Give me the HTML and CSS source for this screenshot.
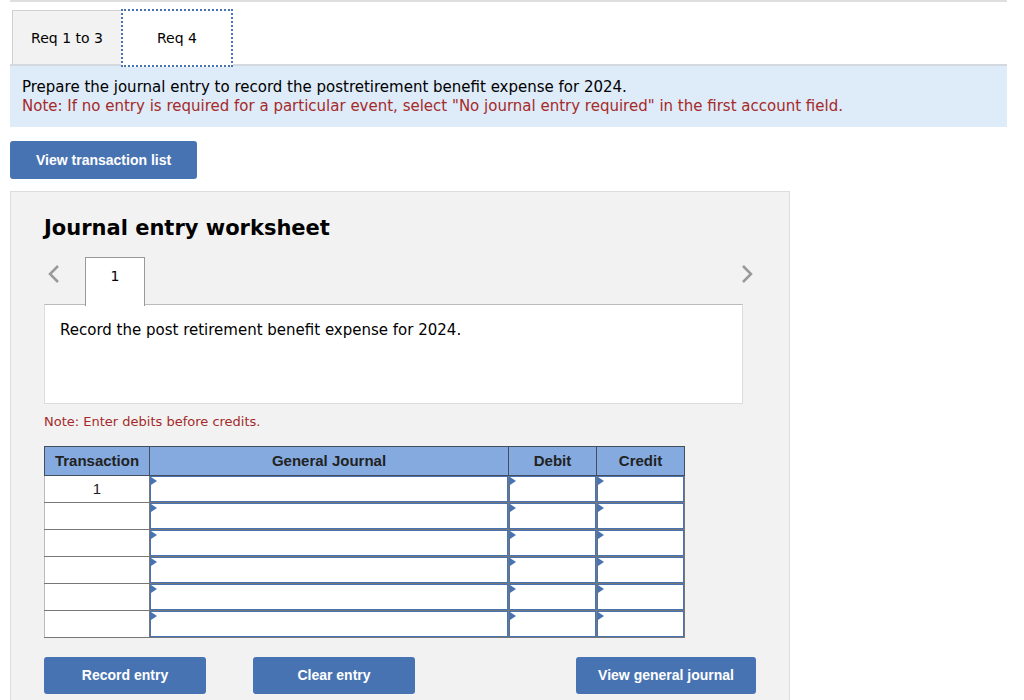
FILE: index.html
```html
<!DOCTYPE html>
<html lang="en">
<head>
  <meta charset="UTF-8">
  <title>Journal entry worksheet</title>
  <meta name="viewport" content="width=device-width, initial-scale=1.0">
  <link rel="stylesheet" href="styles.css">
</head>
<body>
  <main class="page">
    <nav class="req-tabs">
      <button type="button" class="req-tab">Req 1 to 3</button>
      <button type="button" class="req-tab active">Req 4</button>
    </nav>
    <div class="instructions">
      <p>Prepare the journal entry to record the postretirement benefit expense for 2024.</p>
      <p class="note">Note: If no entry is required for a particular event, select "No journal entry required" in the first account field.</p>
    </div>
    <button type="button" class="btn btn-list">View transaction list</button>

    <section class="worksheet">
      <h2>Journal entry worksheet</h2>
      <div class="entry-nav">
        <button type="button" class="arrow" aria-label="Previous entry">
          <svg width="12" height="20" viewBox="0 0 12 20"><path d="M10 2 L2 10 L10 18"/></svg>
        </button>
        <button type="button" class="entry-tab">1</button>
        <button type="button" class="arrow next" aria-label="Next entry">
          <svg width="12" height="20" viewBox="0 0 12 20"><path d="M2 2 L10 10 L2 18"/></svg>
        </button>
      </div>
      <div class="description">Record the post retirement benefit expense for 2024.</div>
      <p class="note table-note">Note: Enter debits before credits.</p>

      <table class="journal">
        <thead>
          <tr>
            <th class="col-transaction">Transaction</th>
            <th class="col-account">General Journal</th>
            <th class="col-amount">Debit</th>
            <th class="col-amount">Credit</th>
          </tr>
        </thead>
        <tbody>
          <tr>
            <td>1</td>
            <td class="field"><input type="text" aria-label="General Journal, row 1"></td>
            <td class="field"><input type="text" aria-label="Debit, row 1"></td>
            <td class="field"><input type="text" aria-label="Credit, row 1"></td>
          </tr>
          <tr>
            <td></td>
            <td class="field"><input type="text" aria-label="General Journal, row 2"></td>
            <td class="field"><input type="text" aria-label="Debit, row 2"></td>
            <td class="field"><input type="text" aria-label="Credit, row 2"></td>
          </tr>
          <tr>
            <td></td>
            <td class="field"><input type="text" aria-label="General Journal, row 3"></td>
            <td class="field"><input type="text" aria-label="Debit, row 3"></td>
            <td class="field"><input type="text" aria-label="Credit, row 3"></td>
          </tr>
          <tr>
            <td></td>
            <td class="field"><input type="text" aria-label="General Journal, row 4"></td>
            <td class="field"><input type="text" aria-label="Debit, row 4"></td>
            <td class="field"><input type="text" aria-label="Credit, row 4"></td>
          </tr>
          <tr>
            <td></td>
            <td class="field"><input type="text" aria-label="General Journal, row 5"></td>
            <td class="field"><input type="text" aria-label="Debit, row 5"></td>
            <td class="field"><input type="text" aria-label="Credit, row 5"></td>
          </tr>
          <tr>
            <td></td>
            <td class="field"><input type="text" aria-label="General Journal, row 6"></td>
            <td class="field"><input type="text" aria-label="Debit, row 6"></td>
            <td class="field"><input type="text" aria-label="Credit, row 6"></td>
          </tr>
        </tbody>
      </table>

      <div class="actions">
        <button type="button" class="btn">Record entry</button>
        <button type="button" class="btn">Clear entry</button>
        <button type="button" class="btn btn-journal">View general journal</button>
      </div>
    </section>
  </main>
</body>
</html>
```
FILE: styles.css
```css
* {
  box-sizing: border-box;
}
body {
  margin: 0;
  background-color: #fff;
  color: #000;
  font-family: Verdana, "DejaVu Sans", sans-serif;
  font-size: 15px;
}
p, h2 {
  margin: 0;
}
button {
  font-family: inherit;
  color: inherit;
  cursor: pointer;
}
.page {
  margin: 0 17px 0 10px;
  border-top: 2px solid #dfdfdf;
}

/* requirement tabs */
.req-tabs {
  display: flex;
  padding: 7px 0 0 2px;
}
.req-tab {
  width: 110px;
  height: 54px;
  margin-top: 1px;
  border: 1px solid #d0d0d0;
  border-bottom: none;
  background-color: #f2f2f2;
  font-size: 14px;
}
.req-tab.active {
  position: relative;
  width: 112px;
  height: 58px;
  margin: 0 0 -3px -1px;
  border: 2px dotted #4873b3;
  background-color: #fff;
}
.instructions {
  padding: 12px 12px 11px;
  border-top: 2px solid #d3d9df;
  background-color: #deebf8;
  line-height: 19px;
}
.note {
  color: #a52a2a;
}

.btn {
  height: 37px;
  min-width: 162px;
  padding: 0 22px 1px;
  border: none;
  border-radius: 3px;
  background-color: #4873b3;
  color: #fff;
  font-family: Arial, "Liberation Sans", sans-serif;
  font-size: 14px;
  font-weight: bold;
}
.btn-list {
  display: block;
  height: 38px;
  margin: 14px 0 12px;
  padding: 0 26px 1px;
}

/* worksheet */
.worksheet {
  max-width: 780px;
  padding: 23px 33px 24px;
  border: 1px solid #dcdcdc;
  background-color: #f2f2f2;
}
.worksheet h2 {
  font-size: 21px;
  line-height: 26px;
}
.entry-nav {
  display: flex;
  align-items: flex-start;
  margin-top: 16px;
}
.arrow {
  display: flex;
  width: 41px;
  padding: 7px 4px;
  border: none;
  background: none;
}
.arrow.next {
  width: auto;
  margin-left: auto;
  padding-right: 3px;
}
.arrow svg {
  fill: none;
  stroke: #999;
  stroke-width: 2.5;
}
.entry-tab {
  position: relative;
  width: 60px;
  height: 49px;
  margin-bottom: -2px;
  padding: 0 0 12px;
  border: 1px solid #999;
  border-bottom: none;
  background-color: #fff;
  font-size: 14px;
}
.description {
  min-height: 100px;
  margin-right: 13px;
  padding: 16px 15px;
  border: 1px solid #dcdcdc;
  border-top-color: #bbb;
  background-color: #fff;
  line-height: 19px;
}
.table-note {
  margin: 8px 0 15px;
  font-size: 13px;
  line-height: 19px;
}

.journal {
  width: 641px;
  max-width: 100%;
  border-collapse: collapse;
  table-layout: fixed;
  color: #222;
  font-family: Arial, "Liberation Sans", sans-serif;
  font-size: 15px;
}
.journal th, .journal td {
  padding: 0;
  border: 1px solid #777;
  text-align: center;
}
.journal th {
  height: 29px;
  padding-bottom: 2px;
  border-color: #444e5c;
  background-color: #84aae0;
}
.journal td {
  height: 27px;
  padding-bottom: 1px;
  background-color: #fff;
}
.journal td:first-child {
  border-left-color: #bbb;
}
.col-transaction {
  width: 105px;
}
.col-amount {
  width: 88px;
}
.journal .field {
  position: relative;
  padding: 0;
}
.field input {
  display: block;
  width: 100%;
  height: 26px;
  padding: 0 8px;
  border: 1px solid #4873b3;
  border-radius: 0;
  background-color: #fff;
  font: inherit;
}
/* small flag in the corner of each field */
.field::before {
  content: "";
  position: absolute;
  top: 1px;
  left: 1px;
  border: 4px solid transparent;
  border-left: 6px solid #4873b3;
  border-right: none;
}

.actions {
  display: flex;
  gap: 47px;
  margin-top: 19px;
}
.btn-journal {
  margin-left: auto;
}
```
